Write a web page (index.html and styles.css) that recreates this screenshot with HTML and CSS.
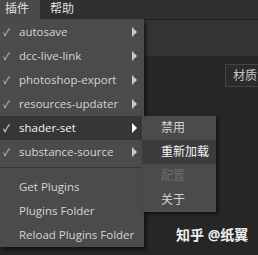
FILE: index.html
```
<!doctype html>
<html lang="zh">
<head>
  <meta charset="UTF-8">
  <title>插件菜单</title>
  <link rel="stylesheet" href="styles.css">
</head>
<body>
  <div class="menubar">
    <span class="tab on">插件</span>
    <span class="tab">帮助</span>
  </div>
  <div class="toolbar"></div>
  <div class="work">
    <span class="label">材质</span>
  </div>

  <ul class="menu">
    <li class="item"><i class="check">✓</i><span>autosave</span><b class="arrow"></b></li>
    <li class="item"><i class="check">✓</i><span>dcc-live-link</span><b class="arrow"></b></li>
    <li class="item"><i class="check">✓</i><span>photoshop-export</span><b class="arrow"></b></li>
    <li class="item"><i class="check">✓</i><span>resources-updater</span><b class="arrow"></b></li>
    <li class="item hover"><i class="check">✓</i><span>shader-set</span><b class="arrow"></b></li>
    <li class="item"><i class="check">✓</i><span>substance-source</span><b class="arrow"></b></li>
    <li class="sep"></li>
    <li class="item"><i class="check"></i><span>Get Plugins</span></li>
    <li class="item"><i class="check"></i><span>Plugins Folder</span></li>
    <li class="item"><i class="check"></i><span>Reload Plugins Folder</span></li>
  </ul>

  <ul class="submenu">
    <li class="sub">禁用</li>
    <li class="sub hover">重新加载</li>
    <li class="sub off">配置</li>
    <li class="sub">关于</li>
  </ul>

  <div class="mark">知乎 @纸翼</div>
</body>
</html>
```
FILE: styles.css
```
body,ul,li{margin:0; padding:0;}
ul,li{list-style:none;}
body{background:#262626; font-family:"Open Sans","Noto Sans CJK SC",sans-serif; font-size:11.5px; color:#d4d4d4; height:255px; overflow:hidden;}

.menubar{height:19px; background:#2f2f2f; display:flex;}
.tab{width:40px; line-height:18px; padding-left:5px; box-sizing:border-box; font-size:12px; color:#e0e0e0;}
.tab + .tab{padding-left:10px;}
.tab.on{background:#4a4a4a;}
.toolbar{height:36px; background:#333333; border-top:1px solid #1d1d1d;}
.work{display:flex; justify-content:flex-end; padding-top:8px;}
.label{border:1px solid #444; border-right:0; height:21px; line-height:21px; padding:0 3px 0 7px; margin-right:-2px; font-size:12px; color:#c8c8c8; background:#2b2b2b; white-space:nowrap;}

.menu{position:absolute; left:0; top:19px; width:144px; background:#4b4b4b; padding-top:1px; box-shadow:2px 3px 3px rgba(0,0,0,.55);}
.item{height:24px; display:flex; align-items:center; position:relative; line-height:24px;}
.item.hover{background:#363636; color:#f4f4f4;}
.check{width:19px; flex:none; font-style:normal; font-size:10px; text-indent:3px; color:#d0d0d0;}
.hover .check{color:#fff;}
.arrow{position:absolute; left:132px; top:7px; width:0; height:0; border-top:5px solid transparent; border-bottom:5px solid transparent; border-left:5px solid #c8c8c8;}
.hover .arrow{border-left-color:#fff;}
.sep{height:8px; border-top:1px solid #363636; margin-top:3px; box-sizing:border-box;}

.submenu{position:absolute; left:142px; top:116px; width:74px; background:#4b4b4b; box-shadow:2px 2px 3px rgba(0,0,0,.55);}
.sub{height:24px; line-height:24px; padding-left:19px; font-size:12px;}
.sub.hover{background:#3c3c3c; color:#f4f4f4;}
.sub.off{color:#6c6c6c;}

.mark{position:absolute; left:176px; top:224px; font-size:14px; font-weight:bold; color:#f0f0f0;}
```
